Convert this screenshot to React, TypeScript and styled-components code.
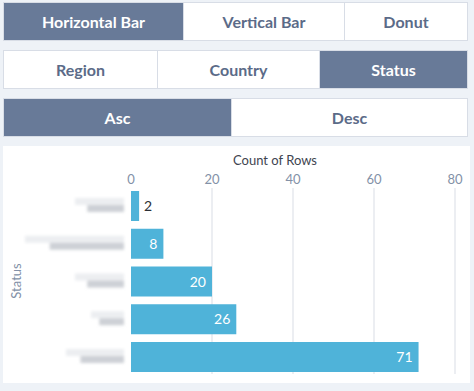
import React from "react";
import styled, { createGlobalStyle } from "styled-components";

const Global = createGlobalStyle`
  html, body { margin: 0; padding: 0; background: #eef2f7; }
  body { font-family: "Lato", "Open Sans", sans-serif; }
`;

const Page = styled.div`
  display: flex;
  flex-direction: column;
  gap: 9px;
  padding: 2px 6px 0 3px;
  width: 474px;
  box-sizing: border-box;
`;

const Segmented = styled.div<{ $cols: string }>`
  display: grid;
  grid-template-columns: ${(p) => p.$cols};
  height: 39px;
  box-sizing: border-box;
  border: 1px solid #d8dde6;
  background: #ffffff;
`;

const Seg = styled.button<{ $active?: boolean }>`
  appearance: none;
  border: none;
  border-left: 1px solid #d8dde6;
  &:first-child { border-left: none; }
  margin: 0;
  padding: 0;
  background: ${(p) => (p.$active ? "#687a98" : "#ffffff")};
  color: ${(p) => (p.$active ? "#ffffff" : "#5b6b88")};
  font-family: "Lato", "Open Sans", sans-serif;
  font-weight: 700;
  font-size: 16px;
  display: flex;
  align-items: center;
  justify-content: center;
`;

const Panel = styled.div`
  background: #ffffff;
  width: 467px;
  height: 237px;
`;

const Svg = styled.svg`
  display: block;
`;

const data = [
  { v: 2, w: 49 },
  { v: 8, w: 99 },
  { v: 20, w: 49 },
  { v: 26, w: 33 },
  { v: 71, w: 58 },
];

const X0 = 128;
const SCALE = 4.05;

export default function App() {
  return (
    <>
      <Global />
      <Page>
        <Segmented $cols="179px 161px 1fr">
          <Seg $active>Horizontal Bar</Seg>
          <Seg>Vertical Bar</Seg>
          <Seg>Donut</Seg>
        </Segmented>
        <Segmented $cols="153px 162px 1fr">
          <Seg>Region</Seg>
          <Seg>Country</Seg>
          <Seg $active>Status</Seg>
        </Segmented>
        <Segmented $cols="227px 1fr">
          <Seg $active>Asc</Seg>
          <Seg>Desc</Seg>
        </Segmented>
        <Panel>
          <Svg width="467" height="237" viewBox="0 0 467 237">
            <defs>
              <filter id="blur" x="-20%" y="-40%" width="140%" height="180%">
                <feGaussianBlur stdDeviation="1.8" />
              </filter>
            </defs>
            <text
              x="272"
              y="19"
              textAnchor="middle"
              fontFamily="Lato, 'Open Sans', sans-serif"
              fontSize="13"
              fill="#3e4450"
            >
              Count of Rows
            </text>
            {[0, 20, 40, 60, 80].map((t) => (
              <text
                key={t}
                x={X0 + t * SCALE}
                y="38"
                textAnchor="middle"
                fontFamily="Lato, 'Open Sans', sans-serif"
                fontSize="13"
                fill="#8391a7"
              >
                {t}
              </text>
            ))}
            {[20, 40, 60, 80].map((t) => (
              <line
                key={t}
                x1={X0 + t * SCALE}
                x2={X0 + t * SCALE}
                y1="42"
                y2="228"
                stroke="#e6e9ee"
                strokeWidth="1.5"
              />
            ))}
            <text
              transform="translate(18 135) rotate(-90)"
              textAnchor="middle"
              fontFamily="Lato, 'Open Sans', sans-serif"
              fontSize="13"
              fill="#8391a7"
            >
              Status
            </text>
            {data.map((d, i) => {
              const y = 45 + i * 37.75;
              const w = d.v * SCALE;
              const inside = w > 20;
              return (
                <g key={i}>
                  <g filter="url(#blur)">
                    <rect x={121 - d.w} y={y + 7} width={d.w} height="7" fill="#eceef1" />
                    <rect x={121 - d.w * 0.75} y={y + 14} width={d.w * 0.75} height="7" fill="#cdd0d6" />
                  </g>
                  <rect x={X0} y={y} width={w} height="30" fill="#4fb3d9" />
                  <text
                    x={inside ? X0 + w - 6 : X0 + w + 5}
                    y={y + 20}
                    textAnchor={inside ? "end" : "start"}
                    fontFamily="Lato, 'Open Sans', sans-serif"
                    fontSize="14"
                    fill={inside ? "#ffffff" : "#2b2f36"}
                  >
                    {d.v}
                  </text>
                </g>
              );
            })}
          </Svg>
        </Panel>
      </Page>
    </>
  );
}
